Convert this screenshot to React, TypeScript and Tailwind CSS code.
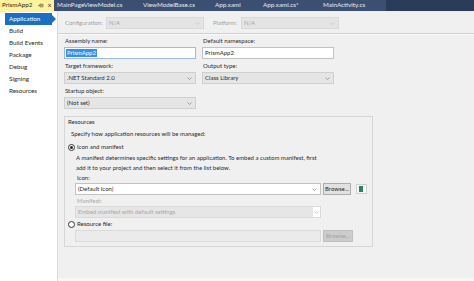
import React from 'react';

const font = { fontFamily: 'Lato, "Noto Sans", sans-serif' };

const Chevron = ({ light }: { light?: boolean }) => (
  <svg width="5" height="3" viewBox="0 0 5 3" className="shrink-0">
    <path d="M0.5 0.5 L2.5 2.5 L4.5 0.5" fill="none" stroke={light ? '#c4c4c4' : '#8a8a8a'} strokeWidth="0.8" />
  </svg>
);

function Select({ text, className, disabled, white }: { text: string; className: string; disabled?: boolean; white?: boolean }) {
  return (
    <div
      className={`h-[12px] flex items-center justify-between pl-[2px] pr-[3px] border ${
        disabled
          ? 'bg-[#e4e4e4] border-[#d9d9d9] text-[#a8a8a8]'
          : white
            ? 'bg-white border-[#c2c2c2] text-[#2a2a2a]'
            : 'bg-[#e5e5e5] border-[#cfcfcf] text-[#2a2a2a]'
      } ${className}`}
    >
      <span className="leading-none">{text}</span>
      <Chevron light={disabled} />
    </div>
  );
}

function Field({ label, children }: { label: string; children: React.ReactNode }) {
  return (
    <div className="flex flex-col w-[132px]">
      <div className="h-[10px] leading-[10px] pl-[1px]">{label}</div>
      <div className="h-[1px]" />
      {children}
    </div>
  );
}

const tabs = [
  { name: 'MainPageViewModel.cs', w: 'w-[86px]' },
  { name: 'ViewModelBase.cs', w: 'w-[72px]' },
  { name: 'App.xaml', w: 'w-[48px]' },
  { name: 'App.xaml.cs*', w: 'w-[60px]' },
  { name: 'MainActivity.cs', w: 'w-[66px]' },
];

const nav = ['Application', 'Build', 'Build Events', 'Package', 'Debug', 'Signing', 'Resources'];

export default function App() {
  return (
    <div className="w-[474px] h-[281px] overflow-hidden flex flex-col text-[6px] text-[#2a2a2a] bg-[#f0f0f0]" style={font}>
      {/* document tabs */}
      <div className="h-[11px] flex bg-[#2b3b5a] shrink-0">
        <div className="w-[54px] bg-[#fff29d] flex items-center pl-[2px] text-[#1e1e1e]">
          <span className="leading-none text-[6.3px]">PrismApp2</span>
          <svg width="6" height="5" viewBox="0 0 6 5" className="ml-[6px]">
            <path d="M0 2.5 H2 M2 0.8 V4.2 M2 1.2 H5 V3.8 H2 M2 2.2 H5" fill="none" stroke="#6b6b3a" strokeWidth="0.7" />
          </svg>
          <span className="ml-[3px] leading-none text-[7px] text-[#333]">×</span>
        </div>
        <div className="flex bg-[#3b4f73]">
          {tabs.map((t) => (
            <div key={t.name} className={`${t.w} flex items-center pl-[3px] text-[#e6ebf3]`}>
              <span className="leading-none text-[6.3px]">{t.name}</span>
            </div>
          ))}
        </div>
        <div className="flex-1" />
      </div>
      <div className="h-[1px] bg-[#eef2c8] shrink-0" />

      <div className="flex flex-1 min-h-0">
        {/* property page list */}
        <div className="w-[57px] bg-white flex flex-col pt-[1px] shrink-0 text-[6.3px]">
          {nav.map((n, i) =>
            i === 0 ? (
              <div key={n} className="relative h-[12px] ml-[5px] w-[47px] bg-[#1c6fc0] text-white flex items-center pl-[4px]">
                <span className="leading-none">{n}</span>
                <div className="absolute right-[-4px] top-[2px] w-0 h-0 border-y-[4px] border-y-transparent border-l-[4px] border-l-[#1c6fc0]" />
              </div>
            ) : (
              <div key={n} className="h-[12px] pl-[9px] flex items-center">
                <span className="leading-none">{n}</span>
              </div>
            ),
          )}
        </div>

        {/* page body */}
        <div className="flex-1 flex flex-col border-l border-[#dadada]">
          <div className="flex items-center mt-[5px] pl-[7px] h-[12px]">
            <span className="w-[41px] text-[#a0a0a0] leading-none">Configuration:</span>
            <Select text="N/A" disabled className="w-[98px] bg-[#cdcdcd] border-[#c4c4c4] text-[#8f8f8f]" />
            <span className="ml-[9px] w-[28px] text-[#a0a0a0] leading-none">Platform:</span>
            <Select text="N/A" disabled className="w-[98px] bg-[#cdcdcd] border-[#c4c4c4] text-[#8f8f8f]" />
          </div>
          <div className="mt-[4px] h-[1px] bg-[#cfcfcf]" />
          <div className="h-[1px] bg-[#fafafa]" />

          <div className="pl-[6px] flex flex-col gap-[2px] mt-[1px]">
            <div className="flex gap-[6px]">
              <Field label="Assembly name:">
                <div className="h-[12px] bg-white border border-[#9dbbe0] flex items-center pl-[1px]">
                  <span className="bg-[#3390f0] text-white leading-[8px] px-[1px]">PrismApp2</span>
                </div>
              </Field>
              <Field label="Default namespace:">
                <div className="h-[12px] bg-white border border-[#c2c2c2] flex items-center pl-[2px]">
                  <span className="leading-none">PrismApp2</span>
                </div>
              </Field>
            </div>
            <div className="flex gap-[6px]">
              <Field label="Target framework:">
                <Select text=".NET Standard 2.0" className="w-[132px]" />
              </Field>
              <Field label="Output type:">
                <Select text="Class Library" className="w-[132px]" />
              </Field>
            </div>
            <Field label="Startup object:">
              <Select text="(Not set)" className="w-[132px]" />
            </Field>

            {/* resources group */}
            <div className="mt-[5px] w-[309px] h-[131px] border border-[#d6d6d6] flex flex-col pl-[3px]">
              <div className="h-[10px] leading-[10px]">Resources</div>
              <div className="h-[11px] leading-[11px] pl-[3px] mt-[1px]">Specify how application resources will be managed:</div>
              <div className="h-[10px] mt-[3px] flex items-center">
                <div className="w-[7px] h-[7px] rounded-full border border-[#333] bg-white flex items-center justify-center">
                  <div className="w-[3px] h-[3px] rounded-full bg-[#222]" />
                </div>
                <span className="ml-[2px] leading-none">Icon and manifest</span>
              </div>
              <div className="pl-[8px] leading-[10px] mt-[1px]">
                <div>A manifest determines specific settings for an application. To embed a custom manifest, first</div>
                <div>add it to your project and then select it from the list below.</div>
              </div>
              <div className="h-[10px] leading-[10px] pl-[9px]">Icon:</div>
              <div className="flex items-center pl-[7px] h-[12px]">
                <Select text="(Default Icon)" white className="w-[246px]" />
                <div className="ml-[2px] w-[28px] h-[12px] bg-[#e1e1e1] border border-[#adadad] flex items-center justify-center">
                  <span className="leading-none">Browse...</span>
                </div>
                <div className="ml-[5px] w-[11px] h-[10px] border border-[#d0d0d0] bg-[#f7f7f7] flex items-center pl-[2px]">
                  <div className="w-[4px] h-[6px] bg-[#2f7d68]" />
                </div>
              </div>
              <div className="h-[10px] leading-[10px] pl-[9px] mt-[1px] text-[#a6a6a6]">Manifest:</div>
              <div className="pl-[7px]">
                <div className="w-[246px] h-[12px] border border-[#dadada] bg-[#e6e6e6] flex items-center justify-between pl-[2px] text-[#a8a8a8]">
                  <span className="leading-none">Embed manifest with default settings</span>
                  <div className="w-[7px] h-[10px] bg-white flex items-center justify-center">
                    <Chevron light />
                  </div>
                </div>
              </div>
              <div className="h-[10px] mt-[1px] flex items-center">
                <div className="w-[7px] h-[7px] rounded-full border border-[#333] bg-white" />
                <span className="ml-[2px] leading-none">Resource file:</span>
              </div>
              <div className="flex items-center pl-[7px] h-[12px] mt-[1px]">
                <div className="w-[246px] h-[12px] border border-[#dadada] bg-[#ebebeb]" />
                <div className="ml-[2px] w-[30px] h-[12px] bg-[#cccccc] border border-[#bfbfbf] flex items-center justify-center text-[#a3a3a3]">
                  <span className="leading-none">Browse...</span>
                </div>
              </div>
            </div>
          </div>
          <div className="flex-1" />
          <div className="h-[3px] bg-[#f7f7f7]" />
        </div>
      </div>
    </div>
  );
}
